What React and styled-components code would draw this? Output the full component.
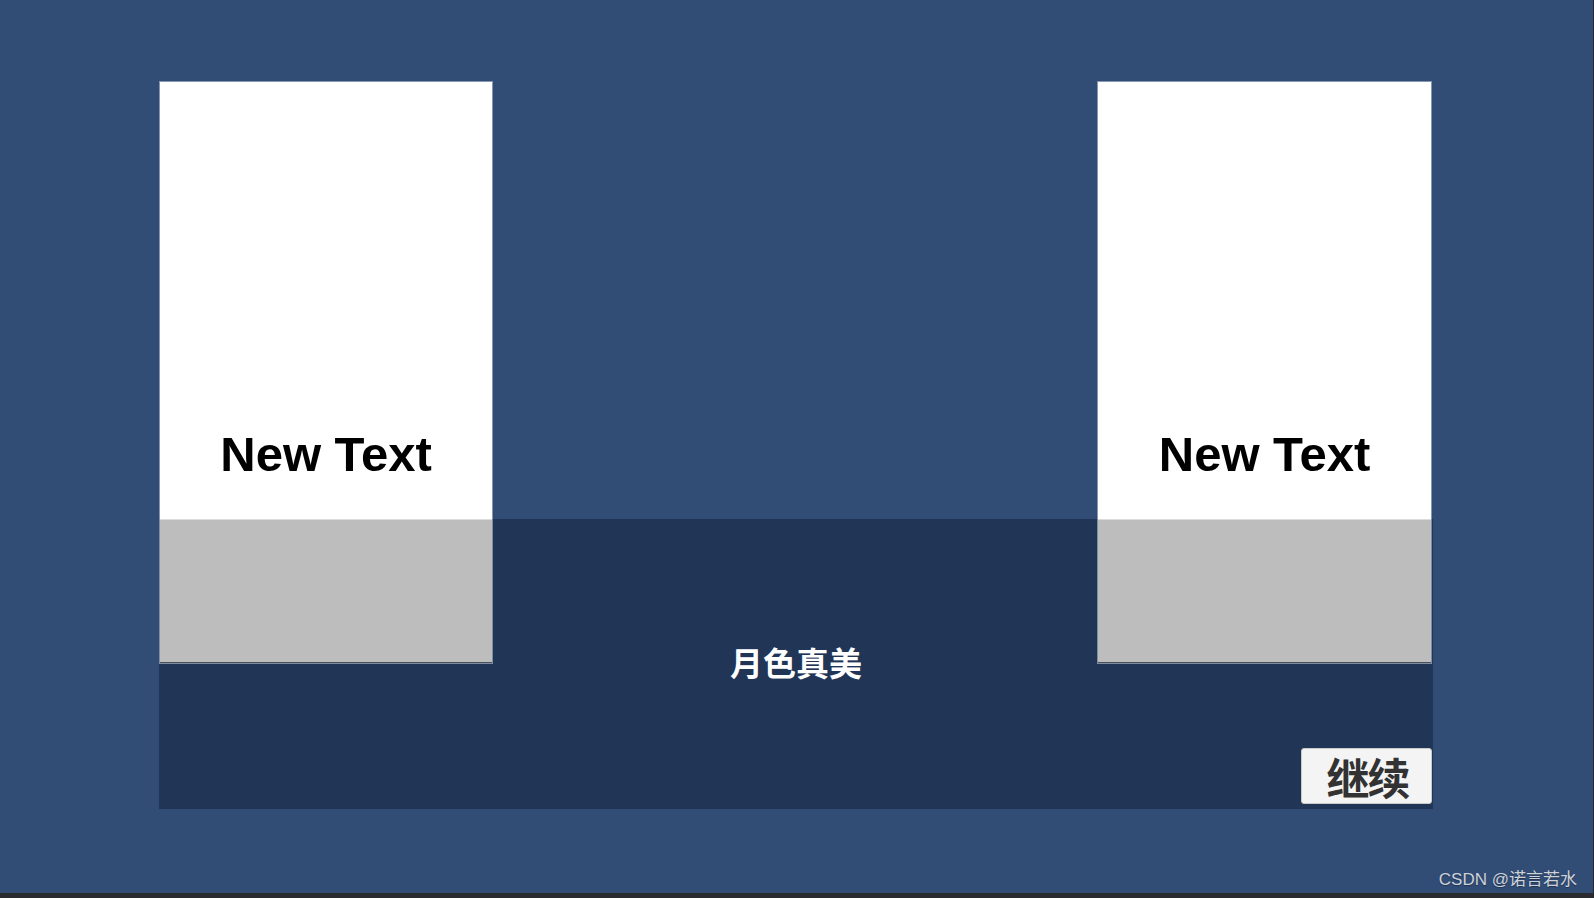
import React from 'react'
import styled, { createGlobalStyle } from 'styled-components'

const GlobalStyle = createGlobalStyle`
  html, body {
    margin: 0;
    padding: 0;
    background: #314d76;
  }
  * {
    box-sizing: border-box;
  }
`

const Screen = styled.div`
  width: 1594px;
  height: 898px;
  background: #314d76;
  display: flex;
  flex-direction: column;
  border-right: 1px solid #26282c;
  overflow: hidden;
`

const Stage = styled.div`
  padding: 82px 0 0 159px;
`

const Board = styled.div`
  width: 1274px;
  display: grid;
  grid-template-columns: 1px 332px 1fr 333px 2px;
  grid-template-rows: 437px 144px 146px;
`

const Backdrop = styled.div`
  grid-column: 1 / -1;
  grid-row: 2 / 4;
  background: #213556;
`

const Card = styled.div`
  grid-row: 1 / 3;
  grid-column: ${p => p.$col};
  display: flex;
  flex-direction: column;
  box-shadow: 0 0 0 1px rgba(205, 214, 228, 0.55);
  z-index: 1;
`

const CardFace = styled.div`
  flex: 1;
  background: #ffffff;
  display: flex;
  align-items: flex-end;
  justify-content: center;
  padding-bottom: 40px;
  font-family: "Liberation Sans", Arial, sans-serif;
  font-weight: 700;
  font-size: 49px;
  line-height: 1;
  color: #000;
`

const CardShade = styled.div`
  height: 144px;
  background: #bdbdbd;
  border-top: 1px solid #dcdcdc;
  border-bottom: 1px solid #4a4f58;
`

const Caption = styled.div`
  grid-column: 3;
  grid-row: 2 / 4;
  align-self: center;
  justify-self: center;
  margin: 0 0 4px 2px;
  z-index: 1;
  font-family: "Noto Sans CJK SC", "Noto Sans", sans-serif;
  font-weight: 700;
  font-size: 33px;
  line-height: 1;
  color: #ffffff;
`

const ContinueButton = styled.button`
  grid-column: 4 / 6;
  grid-row: 3;
  justify-self: end;
  align-self: end;
  margin: 0 1px 5px 0;
  width: 131px;
  height: 56px;
  z-index: 1;
  padding: 0 0 0 2px;
  border: 1px solid #c9c9c9;
  border-radius: 3px;
  background: #f4f4f4;
  font-family: "Noto Sans CJK SC", "Noto Sans", sans-serif;
  font-weight: 700;
  font-size: 43px;
  letter-spacing: -2px;
  line-height: 1;
  color: #323232;
  display: flex;
  align-items: center;
  justify-content: center;
  cursor: pointer;
`

const Footer = styled.div`
  flex: 1;
  display: flex;
  align-items: flex-end;
  justify-content: flex-end;
  padding: 0 16px 3px 0;
`

const Watermark = styled.span`
  font-family: "Liberation Sans", "Noto Sans CJK SC", sans-serif;
  font-size: 17px;
  line-height: 20px;
  color: #cdd2da;
  text-shadow: 0 1px 1px rgba(0, 0, 0, 0.35);
`

const BottomBar = styled.div`
  height: 5px;
  background: #2a2b2e;
`

export default function App() {
  return (
    <>
      <GlobalStyle />
      <Screen>
        <Stage>
          <Board>
            <Backdrop />
            <Card $col={2}>
              <CardFace>New Text</CardFace>
              <CardShade />
            </Card>
            <Card $col={4}>
              <CardFace>New Text</CardFace>
              <CardShade />
            </Card>
            <Caption>月色真美</Caption>
            <ContinueButton>继续</ContinueButton>
          </Board>
        </Stage>
        <Footer>
          <Watermark>CSDN @诺言若水</Watermark>
        </Footer>
        <BottomBar />
      </Screen>
    </>
  )
}
